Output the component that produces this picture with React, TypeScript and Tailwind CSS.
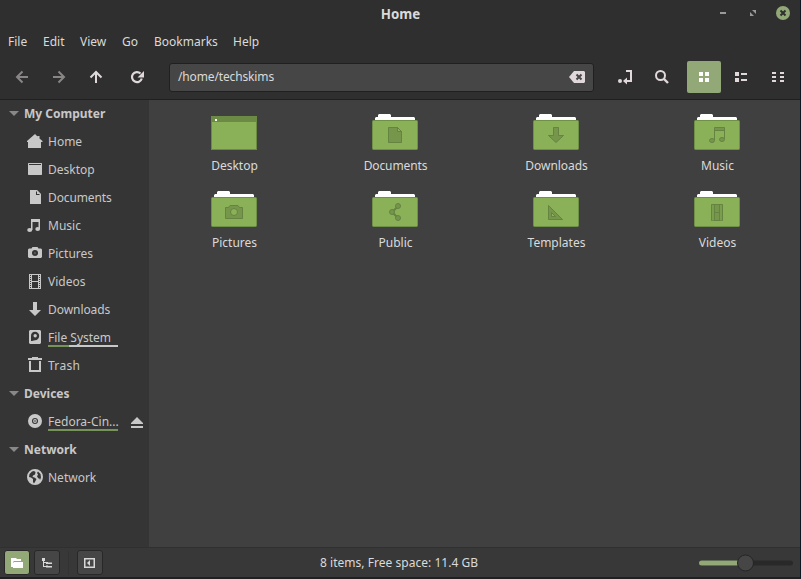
import type { ReactNode } from "react";

const menuItems = [
    { label: "File", width: "w-[35px]" },
    { label: "Edit", width: "w-[37px]" },
    { label: "View", width: "w-[42px]" },
    { label: "Go", width: "w-[32px]" },
    { label: "Bookmarks", width: "w-[79px]" },
    { label: "Help", width: "w-[40px]" },
];

const sideIcons: Record<string, ReactNode> = {
    home: <path d="M8 1l2.500 2.500V3h2v2.500L15.500 8v1H14v6H1V9H0V8z" />,
    desktop: <path fillRule="evenodd" d="M1.500 2h13l.5.5v11l-.5.5h-13l-.5-.5v-11zM2 3v1h12V3z" />,
    documents: (
        <>
            <path d="M3 1h7l4 4v10H3z" />
            <path d="M9 2v4h4z" fill="#353535" />
            <path d="M10 1.500V5h3.500z" />
        </>
    ),
    music: (
        <>
            <path d="M4 2h9v10h-1.500V5h-6v8H4z" />
            <ellipse cx="2.700" cy="13" rx="2.500" ry="2" />
            <ellipse cx="10.700" cy="12" rx="2.400" ry="2" />
        </>
    ),
    pictures: (
        <>
            <path d="M5.500 2h5l1 1.500H14l1 1V12l-1 1H2l-1-1V4.500l1-1h2.500z" />
            <circle cx="8" cy="8" r="3" fill="#353535" />
            <circle cx="8" cy="8" r="1.200" fill="#555" />
        </>
    ),
    videos: (
        <path
            fillRule="evenodd"
            d="M2 1h12v15H2zM5 2v6h6V2zM5 9v6h6V9zM3 2v1h1V2zM3 4v1h1V4zM3 6v1h1V6zM3 8v1h1V8zM3 10v1h1v-1zM3 12v1h1v-1zM3 14v1h1v-1zM12 2v1h1V2zM12 4v1h1V4zM12 6v1h1V6zM12 8v1h1V8zM12 10v1h1v-1zM12 12v1h1v-1zM12 14v1h1v-1z"
        />
    ),
    downloads: <path d="M6 1h4v8h4l-6 6-6-6h4z" />,
    filesystem: (
        <>
            <path d="M3 1h10l1 1v12l-1 1H3l-1-1V2z" />
            <path d="M8 2.800a4.200 4.200 0 1 1 0 8.400L5 12H4V7a4.200 4.200 0 0 1 4-4.200z" fill="#353535" />
            <circle cx="8.200" cy="6.800" r="1.700" />
        </>
    ),
    trash: <path fillRule="evenodd" d="M5 0h6v1h4v2H1V1h4zM2 4h12v11H2zM4 4v9h8V4z" />,
    disc: (
        <>
            <path fillRule="evenodd" d="M8 1a7 7 0 1 1 0 14A7 7 0 0 1 8 1zM8 5a3 3 0 1 0 0 6 3 3 0 0 0 0-6z" />
            <circle cx="8" cy="8" r="1.900" />
            <circle cx="8" cy="8" r=".8" fill="#353535" />
        </>
    ),
    network: (
        <path
            fillRule="evenodd"
            d="M8 0a8 8 0 1 1 0 16A8 8 0 0 1 8 0zM5 2.500 2.500 5 2 8l2 .5 2 1.500v3l1 1.500 1.500-2.500 1-2-2-1.500L5.500 8 6 6.500l2-1L8.500 3 7 2zM11 2.500 10 4l1 1.500-1 2 1.500 2h1l.5 1.500L14 8.500 13.500 5z"
        />
    ),
};

const places = [
    { label: "Home", icon: "home" },
    { label: "Desktop", icon: "desktop" },
    { label: "Documents", icon: "documents", tracking: "tracking-[-0.11px]" },
    { label: "Music", icon: "music" },
    { label: "Pictures", icon: "pictures" },
    { label: "Videos", icon: "videos" },
    { label: "Downloads", icon: "downloads", tracking: "tracking-[-0.06px]" },
    { label: "File System", icon: "filesystem", used: 30 },
    { label: "Trash", icon: "trash", tracking: "tracking-[0.3px]" },
];

const emblems: Record<string, ReactNode> = {
    Documents: (
        <>
            <path d="M16.500 13.500h9l4 4v11h-13z" />
            <path d="M25.500 13.500v4h4z" fill="#8ab158" />
        </>
    ),
    Downloads: <path d="M20.500 13.500h5v8h5l-7.500 7-7.500-7h5z" />,
    Music: (
        <>
            <path d="M20.500 13.500h10V25M20.500 16.500h10M20.500 13.500V26" fill="none" />
            <path d="M21 14h9v2h-9z" stroke="none" />
            <ellipse cx="18" cy="26.500" rx="2.500" ry="2" />
            <ellipse cx="28" cy="25.500" rx="2.500" ry="2" />
        </>
    ),
    Pictures: (
        <>
            <path d="M14.500 16.500h3l1.500-2h8l1.500 2h3v11h-17z" />
            <circle cx="23" cy="21" r="3.500" fill="#8ab158" />
        </>
    ),
    Public: (
        <>
            <path d="M26 15.500 20 21l6 6" fill="none" strokeWidth="2" />
            <circle cx="26" cy="15" r="2.500" />
            <circle cx="20" cy="21" r="2.500" />
            <circle cx="26" cy="27" r="2.500" />
        </>
    ),
    Templates: (
        <>
            <path d="M15.500 14.500v14h14z" />
            <path d="M18.500 21.500v4h4z" fill="#8ab158" />
        </>
    ),
    Videos: (
        <>
            <path d="M17.500 13.500h11v16h-11zM20.500 13.500v16M25.500 13.500v16M20.500 21.500h5" />
            <path d="M19 14.500v15M27 14.500v15" stroke="#8ab158" strokeDasharray="1 1" />
        </>
    ),
};

const folders = [
    { name: "Desktop" },
    { name: "Documents", tracking: "tracking-[-0.11px]" },
    { name: "Downloads", tracking: "tracking-[-0.06px]" },
    { name: "Music" },
    { name: "Pictures" },
    { name: "Public" },
    { name: "Templates" },
    { name: "Videos" },
];

const FolderIcon = ({ name }: { name: string }) => {
    if (name === "Desktop") {
        return (
            <svg width="46" height="36" viewBox="0 0 46 36">
                <path d="M0 2h46v34H0z" fill="#6b8b45" />
                <path d="M1 8h44v27H1z" fill="#8ab158" />
                <path d="M4 5h2v2H4z" fill="#fff" />
            </svg>
        );
    }
    return (
        <svg width="46" height="36" viewBox="0 0 46 36">
            <path d="M3 8V4l1-1h2V1l1-1h11l1 1v2h23l1 1v4z" fill="#fff" />
            <rect x=".5" y="6.500" width="45" height="29" rx="1" fill="#8ab158" stroke="#6f9147" />
            <g fill="#75964b" stroke="#658341">{emblems[name]}</g>
        </svg>
    );
};

const SideHeader = ({ label }: { label: string }) => (
    <div className="flex h-7 items-center pl-[9px] font-bold">
        <svg width="10" height="5" viewBox="0 0 10 5" className="mr-[5px]">
            <path d="M0 0h10L5 5z" fill="#888" />
        </svg>
        <span className="pt-[2px]">{label}</span>
    </div>
);

type SideItemProps = { label: string; icon: string; used?: number; tracking?: string };

const SideItem = ({ label, icon, used, tracking }: SideItemProps) => (
    <div className="flex h-7 items-center pl-[27px]">
        <svg width="16" height="16" viewBox="0 0 16 16" fill="#c8c8c8" className="mr-[5px]">
            {sideIcons[icon]}
        </svg>
        <div className="relative w-[70px] pt-[2px] whitespace-nowrap">
            <span className={tracking}>{label}</span>
            {used !== undefined && (
                <div className="absolute bottom-0 left-0 h-[2px] w-[70px] bg-[#c8c8c8]">
                    <div className="h-full bg-[#76935a]" style={{ width: `${used}%` }} />
                </div>
            )}
        </div>
        {icon === "disc" && (
            <svg width="12" height="11" viewBox="0 0 12 11" fill="#c8c8c8" className="ml-[13px] mt-[2px]">
                <path d="M6 0l6 6v1H0V6zM0 9h12v2H0z" />
            </svg>
        )}
    </div>
);

const TitleBar = () => (
    <div className="flex h-7 items-center">
        <div className="w-[100px] shrink-0" />
        <h1 className="flex-1 text-center text-[13.3px] leading-7 font-bold text-[#dadada]">Home</h1>
        <svg width="99" height="28" viewBox="701 0 99 28" className="shrink-0">
            <path d="M720 12h6v2h-6z" fill="#999" />
            <path d="M752 10h4v4zM750 12l4 4h-4z" fill="#999" />
            <circle cx="783" cy="13" r="7" fill="#92a977" />
            <path d="m780.500 10.500 5 5m0-5-5 5" stroke="#2f2f2f" strokeWidth="2" />
        </svg>
    </div>
);

const Toolbar = () => (
    <div className="flex h-[44px] items-center">
        <svg width="160" height="44" viewBox="0 55 160 44" fill="none" strokeWidth="2" className="mr-[9px]">
            <path d="M28 77H17m5.500-5.500L17 77l5.500 5.500" stroke="#8a8686" />
            <path d="M53 77h11m-5.500-5.500L64 77l-5.500 5.500" stroke="#8a8686" />
            <path d="M96 83V72m-5.500 5.500L96 72l5.500 5.500" stroke="#e0d8da" />
            <path d="M140.500 73.500a5 5 0 1 0 1.300 5" stroke="#e0d8da" strokeWidth="2.200" />
            <path d="M144 71v6.500h-6.500z" fill="#e0d8da" />
        </svg>
        <div className="flex h-[29px] w-[425px] items-center justify-between rounded-[3px] border border-[#202020] bg-[#464646] pr-[8px] pl-[8px] text-[#dadada]">
            <span className="tracking-[-0.14px]">/home/techskims</span>
            <svg width="16" height="12" viewBox="0 0 16 12">
                <path d="M5 0h10l1 1v10l-1 1H5L0 6z" fill="#e0d8da" />
                <path d="m7.500 3.500 5 5m0-5-5 5" stroke="#464646" strokeWidth="2" />
            </svg>
        </div>
        <svg width="93" height="44" viewBox="594 55 93 44" fill="none" stroke="#e0d8da">
            <circle cx="620" cy="81" r="2" fill="#e0d8da" stroke="none" />
            <path d="M626 71h5v10h-5" strokeWidth="2" />
            <path d="M627 77.500v7l-4-3.500z" fill="#e0d8da" stroke="none" />
            <circle cx="660.500" cy="75.500" r="4.500" strokeWidth="2" />
            <path d="m664 79 4 4" strokeWidth="2.400" />
        </svg>
        <div className="flex h-[32px] w-[34px] items-center justify-center rounded-[2px] bg-[#92a977]">
            <svg width="10" height="10" viewBox="0 0 10 10" fill="#fff">
                <path d="M0 0h4v4H0zM6 0h4v4H6zM0 6h4v4H0zM6 6h4v4H6z" />
            </svg>
        </div>
        <svg width="79" height="44" viewBox="721 55 79 44" fill="#e0d8da">
            <path d="M735 72h4v4h-4zM735 78h4v4h-4zM741 73h6v2h-6zM741 79h6v2h-6zM772 72h4v2h-4zM772 76h4v2h-4zM772 80h4v2h-4zM780 72h4v2h-4zM780 76h4v2h-4zM780 80h4v2h-4z" />
        </svg>
    </div>
);

const StatusBar = () => (
    <div className="flex h-[30px] items-center border-t border-[#303030] bg-[#383838] pl-[4px]">
        <div className="flex h-[25px] w-[26px] items-center justify-center rounded-[3px] border border-[#282828] bg-[#92a977]">
            <svg width="12" height="10" viewBox="0 0 12 10" fill="#fff">
                <path d="M0 0h5l1 1h4v2H3L2 4v5H0zM3 4h9v6H2V5z" />
            </svg>
        </div>
        <div className="ml-[4px] flex h-[25px] w-[26px] items-center justify-center rounded-[3px] border border-[#282828] bg-[#464646]">
            <svg width="10" height="10" viewBox="0 0 10 10" fill="#d8d8d8">
                <path d="M0 0h3v3H2v1h3v1H2v3h3v1H1V3H0zM4 4h2v2H4zM4 7.500h2v2H4zM6 4.500h4V6H6zM6 8h4v1.500H6z" />
            </svg>
        </div>
        <div className="ml-[8px] h-[24px] w-px bg-[#323232]" />
        <div className="ml-[8px] flex h-[25px] w-[26px] items-center justify-center rounded-[3px] border border-[#282828] bg-[#464646]">
            <svg width="11" height="10" viewBox="0 0 11 10" className="mr-px">
                <path d="M.75.75h9.500v8.500H.75z" fill="none" stroke="#d8d8d8" strokeWidth="1.500" />
                <path d="M6 2v6L3 5z" fill="#d8d8d8" />
            </svg>
        </div>
        <p className="ml-[217px] w-[200px] tracking-[0.03px] whitespace-nowrap text-[#dadada]">8 items, Free space: 11.4 GB</p>
        <svg width="98" height="20" viewBox="0 0 98 20" className="ml-[178px]">
            <rect x="1" y="7.500" width="94" height="5" rx="2.500" fill="#292929" />
            <rect x="1" y="7.500" width="44" height="5" rx="2.500" fill="#92a977" />
            <circle cx="47.500" cy="10" r="8" fill="#464646" stroke="#252525" />
        </svg>
    </div>
);

const App = () => {
    return (
        <div className="flex h-[579px] w-[801px] flex-col overflow-hidden border-r border-b-2 border-r-[#0c1722] border-b-[#211f20] bg-[#2f2f2f] font-['Noto_Sans',sans-serif] text-[12px] leading-[18px]">
            <TitleBar />
            <nav className="flex h-[27px] items-center pl-[8px] text-[#dadada]">
                {menuItems.map((item) => (
                    <span key={item.label} className={item.width}>{item.label}</span>
                ))}
            </nav>
            <Toolbar />
            <div className="flex min-h-0 flex-1 border-t border-[#202020]">
                <aside className="w-[149px] shrink-0 bg-[#353535] text-[#c8c8c8]">
                    <div className="-mt-px">
                        <SideHeader label="My Computer" />
                        {places.map((place) => (
                            <SideItem key={place.label} {...place} />
                        ))}
                        <SideHeader label="Devices" />
                        <SideItem label="Fedora-Cin..." icon="disc" used={100} />
                        <SideHeader label="Network" />
                        <SideItem label="Network" icon="network" />
                    </div>
                </aside>
                <main className="flex-1 bg-[#404040] pt-[14px] pl-[4px]">
                    <ul className="grid grid-cols-[repeat(4,161px)] text-[#dadada]">
                        {folders.map(({ name, tracking }) => (
                            <li key={name} className="flex h-[77px] flex-col items-center">
                                <FolderIcon name={name} />
                                <span className={`mt-[7px] pl-[2px] ${tracking ?? ""}`}>{name}</span>
                            </li>
                        ))}
                    </ul>
                </main>
            </div>
            <StatusBar />
        </div>
    );
};

export default App;
